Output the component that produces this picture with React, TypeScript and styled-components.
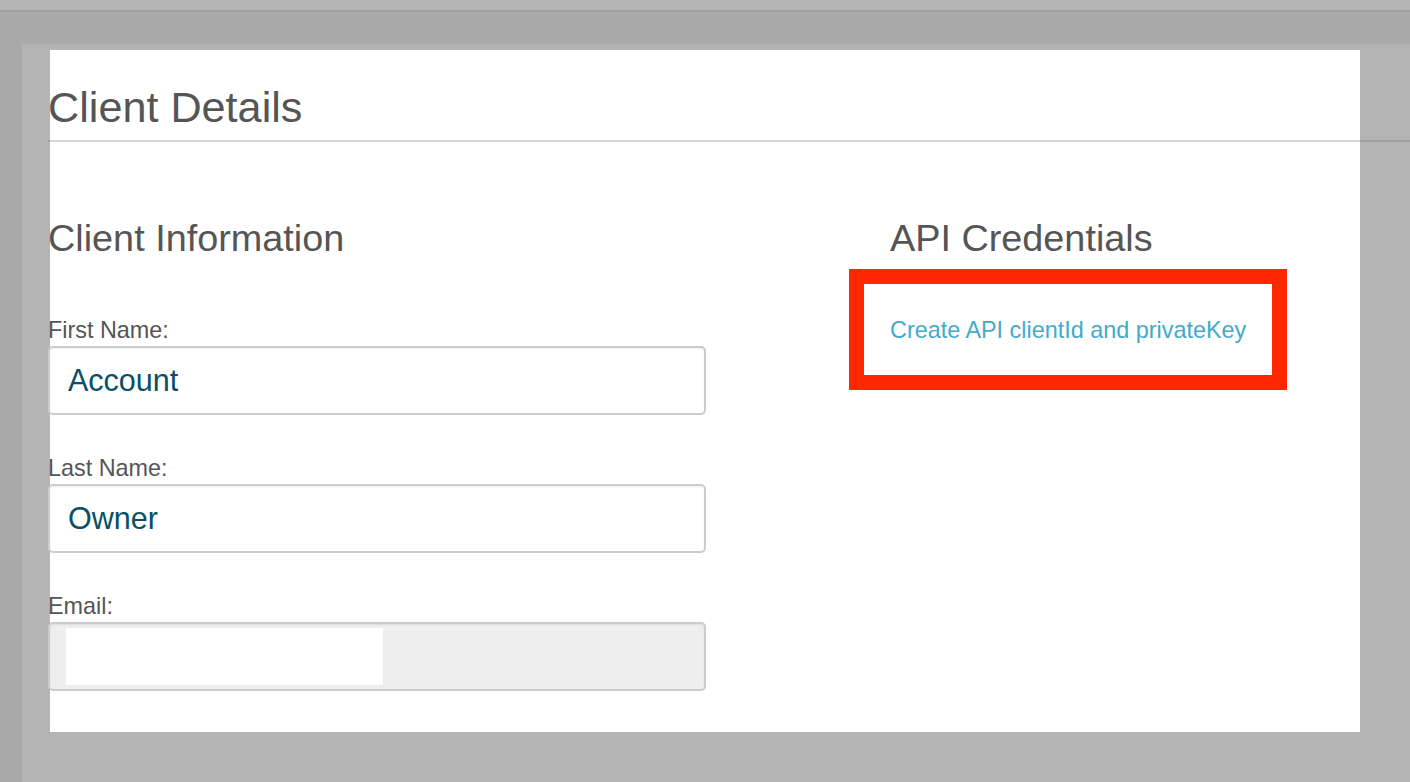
import React from "react";
import styled, { createGlobalStyle } from "styled-components";

const GlobalStyle = createGlobalStyle`
  html, body {
    margin: 0;
    padding: 0;
    width: 1410px;
    height: 782px;
    overflow: hidden;
    background: #b4b4b4;
    font-family: "Liberation Sans", Arial, Helvetica, sans-serif;
  }
  *, *::before, *::after { box-sizing: border-box; }
`;

const Screen = styled.div`
  width: 1410px;
  height: 782px;
  display: flex;
  flex-direction: column;
  background: #b4b4b4;
  overflow: hidden;
`;

const TopBar = styled.div`
  height: 12px;
  flex: none;
  background: #b4b4b4;
  border-bottom: 2px solid #a0a0a0;
`;

const Body = styled.div`
  flex: 1;
  display: grid;
  grid-template-columns: 22px 1fr;
`;

const SideStrip = styled.div`
  background: #a9a9a9;
`;

const Main = styled.div`
  display: flex;
  flex-direction: column;
`;

const ShadeBand = styled.div`
  height: 32px;
  flex: none;
  background: #a9a9a9;
`;

const Stage = styled.div`
  flex: 1;
  padding: 6px 50px 50px 28px;
  background: #b4b4b4;
`;

const Panel = styled.section`
  width: 1310px;
  height: 682px;
  background: #ffffff;
  padding-top: 33px;
  overflow: visible;
`;

const Title = styled.h1`
  margin: 0 0 9px -2px;
  font-size: 43.2px;
  line-height: 48px;
  font-weight: 400;
  color: #555555;
`;

const Divider = styled.hr`
  margin: 0 0 0 -2px;
  width: calc(100% + 52px);
  height: 2px;
  border: none;
  background: rgba(108, 108, 108, 0.28);
`;

const Columns = styled.div`
  margin: 75px 0 0 -2px;
  display: grid;
  grid-template-columns: 658px 1fr;
  column-gap: 184px;
`;

const Column = styled.div`
  display: flex;
  flex-direction: column;
`;

const SectionHeading = styled.h2`
  margin: 0 0 56.5px 0;
  font-size: 37.8px;
  line-height: 42px;
  font-weight: 400;
  color: #555555;
`;

const Field = styled.div`
  display: flex;
  flex-direction: column;
  margin-bottom: 38.5px;
`;

const Label = styled.label`
  display: block;
  font-size: 23.4px;
  line-height: 28px;
  color: #555555;
  margin-bottom: 2.5px;
`;

const InputBox = styled.div<{ $disabled?: boolean }>`
  height: 69px;
  display: flex;
  align-items: center;
  padding: 0 ${(p) => (p.$disabled ? "16px" : "18px")};
  border: 2px solid #cccccc;
  border-radius: 5px;
  background: ${(p) => (p.$disabled ? "#eeeeee" : "#ffffff")};
  box-shadow: inset 0 1px 2px rgba(0, 0, 0, 0.07);
  font-size: 30.5px;
  color: #0a4f66;
`;

const Redacted = styled.span`
  display: block;
  width: 317px;
  height: 57px;
  background: #ffffff;
`;

const LinkWrap = styled.div`
  position: relative;
  font-size: 23.4px;
  line-height: 28px;
`;

const ApiLink = styled.a`
  color: #43aacd;
  text-decoration: none;
  cursor: pointer;
`;

const Highlight = styled.span`
  position: absolute;
  left: -41px;
  top: -46.5px;
  width: 438px;
  height: 121px;
  border: 15px solid #ff2600;
  pointer-events: none;
`;

export default function App() {
  return (
    <>
      <GlobalStyle />
      <Screen>
        <TopBar />
        <Body>
          <SideStrip />
          <Main>
            <ShadeBand />
            <Stage>
              <Panel>
                <Title>Client Details</Title>
                <Divider />
                <Columns>
                  <Column>
                    <SectionHeading>Client Information</SectionHeading>
                    <Field>
                      <Label>First Name:</Label>
                      <InputBox>Account</InputBox>
                    </Field>
                    <Field>
                      <Label>Last Name:</Label>
                      <InputBox>Owner</InputBox>
                    </Field>
                    <Field>
                      <Label>Email:</Label>
                      <InputBox $disabled>
                        <Redacted />
                      </InputBox>
                    </Field>
                  </Column>
                  <Column>
                    <SectionHeading>API Credentials</SectionHeading>
                    <LinkWrap>
                      <ApiLink>Create API clientId and privateKey</ApiLink>
                      <Highlight />
                    </LinkWrap>
                  </Column>
                </Columns>
              </Panel>
            </Stage>
          </Main>
        </Body>
      </Screen>
    </>
  );
}
